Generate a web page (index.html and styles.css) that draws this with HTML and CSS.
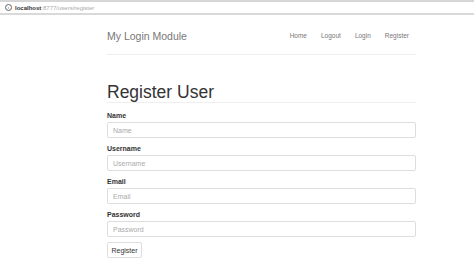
FILE: index.html
```html
<!DOCTYPE html>
<html>
    <head>
        <title>Register</title>
        <link rel="stylesheet" href="styles.css">
    </head>
    <body>
        <div class="addressbar">
            <span class="info">i</span>
            <span class="host">localhost</span><span class="path">:8777/users/register</span>
        </div>
        <div class="container">
            <div class="header">
                <h3 class="brand">My Login Module</h3>
                <ul class="nav">
                    <li><a href="#">Home</a></li>
                    <li><a href="#">Logout</a></li>
                    <li><a href="#">Login</a></li>
                    <li><a href="#">Register</a></li>
                </ul>
            </div>

            <h2 class="page-header">Register User</h2>
            <form class="register-form">
                <div class="form-group">
                    <label for="name">Name</label>
                    <input type="text" id="name" placeholder="Name">
                </div>
                <div class="form-group">
                    <label for="username">Username</label>
                    <input type="text" id="username" placeholder="Username">
                </div>
                <div class="form-group">
                    <label for="email">Email</label>
                    <input type="text" id="email" placeholder="Email">
                </div>
                <div class="form-group">
                    <label for="password">Password</label>
                    <input type="password" id="password" placeholder="Password">
                </div>
                <button type="button" class="btn">Register</button>
            </form>
        </div>
    </body>
</html>
```

FILE: styles.css
```css
body {
    margin: 0;
    font-family: "Liberation Sans", Arial, sans-serif;
    color: #333;
    background: #fff;
}

.addressbar {
    height: 11px;
    border-top: 2px solid #d6d6d6;
    border-bottom: 2px solid #d9d9d9;
    display: flex;
    align-items: center;
    padding-left: 5px;
    font-size: 6px;
    color: #333;
}

.info {
    width: 5px;
    height: 5px;
    border: 1px solid #666;
    border-radius: 50%;
    font-size: 4px;
    line-height: 5px;
    text-align: center;
    margin-right: 3px;
}

.host {
    font-weight: bold;
}

.path {
    color: #aaa;
}

.container {
    width: 309px;
    margin-left: 107px;
}

.header {
    display: flex;
    justify-content: space-between;
    align-items: center;
    height: 37px;
    border-bottom: 1px solid #eee;
    padding-top: 2px;
}

.brand {
    margin: 0;
    font-size: 10.5px;
    font-weight: normal;
    color: #777;
}

.nav {
    display: flex;
    list-style: none;
    margin: 0 7px 0 0;
    padding: 0;
    font-size: 6.5px;
}

.nav li {
    margin-left: 14px;
}

.nav a {
    color: #777;
    text-decoration: none;
}

.page-header {
    margin: 28px 0 0;
    padding-bottom: 0;
    line-height: 19px;
    border-bottom: 1px solid #eee;
    font-size: 17.5px;
    font-weight: normal;
    color: #333;
}

.register-form {
    padding-top: 9px;
}

.form-group {
    margin-bottom: 7px;
}

.form-group label {
    display: block;
    font-size: 7px;
    font-weight: bold;
    margin-bottom: 3px;
}

.form-group input {
    display: block;
    box-sizing: border-box;
    width: 100%;
    height: 16px;
    padding: 0 5px;
    border: 1px solid #ddd;
    border-radius: 2px;
    font-family: "Liberation Sans", Arial, sans-serif;
    font-size: 7px;
    color: #555;
}

.form-group input::placeholder {
    color: #aaa;
}

.form-group:last-of-type {
    margin-bottom: 5px;
}

.btn {
    display: block;
    height: 16px;
    width: 35px;
    padding: 0;
    background: #fff;
    border: 1px solid #ddd;
    border-radius: 2px;
    font-family: "Liberation Sans", Arial, sans-serif;
    font-size: 7px;
    color: #333;
}
```
